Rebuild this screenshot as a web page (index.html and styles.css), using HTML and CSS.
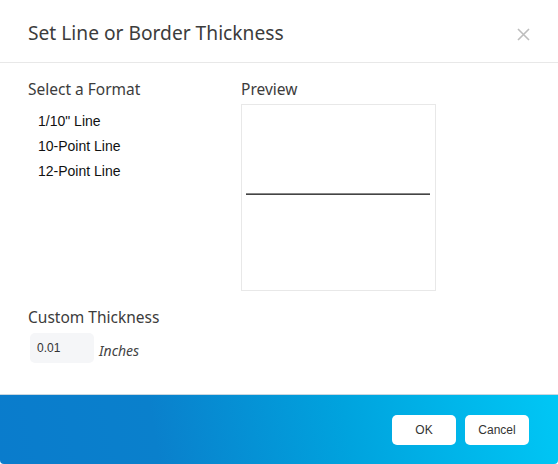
FILE: index.html
```html
<!DOCTYPE html>
<html>
<head>
<meta charset="utf-8">
<link rel="stylesheet" href="styles.css">
</head>
<body>
<div class="dialog">
  <header class="header">
    <h1 class="title">Set Line or Border Thickness</h1>
    <button class="close" aria-label="Close">
      <svg width="13" height="13" viewBox="0 0 13 13"><path d="M1 1L12 12M12 1L1 12" stroke="#bdbdbd" stroke-width="1.6" fill="none"/></svg>
    </button>
  </header>
  <main class="content">
    <div class="columns">
      <section class="format">
        <div class="label">Select a Format</div>
        <ul class="options">
          <li>1/10" Line</li>
          <li>10-Point Line</li>
          <li>12-Point Line</li>
        </ul>
      </section>
      <section class="preview">
        <div class="label">Preview</div>
        <div class="preview-box"><div class="preview-line"></div></div>
      </section>
    </div>
    <section class="custom">
      <div class="label">Custom Thickness</div>
      <div class="custom-row">
        <div class="input">0.01</div>
        <span class="unit">Inches</span>
      </div>
    </section>
  </main>
  <footer class="footer">
    <button class="btn">OK</button>
    <button class="btn">Cancel</button>
  </footer>
</div>
</body>
</html>
```

FILE: styles.css
```css
* { box-sizing: border-box; }
html, body { margin: 0; padding: 0; }
body {
  width: 558px;
  height: 464px;
  background: #fff;
  font-family: "Noto Sans", "Open Sans", sans-serif;
  color: #3a3a3a;
  overflow: hidden;
}
.dialog {
  width: 558px;
  height: 464px;
  display: flex;
  flex-direction: column;
  background: #fff;
}
.header {
  height: 63px;
  border-bottom: 1px solid #e8e8e8;
  display: flex;
  align-items: center;
  justify-content: space-between;
  padding: 0 28px 0 28px;
}
.title {
  margin: 0;
  font-size: 19.2px;
  font-weight: 400;
  color: #3c3c3c;
  line-height: 24px;
  margin-top: 4px;
}
.close {
  border: 0;
  background: none;
  padding: 0;
  width: 13px;
  height: 13px;
  display: block;
  margin-top: 6px;
  margin-right: 0;
}
.close svg { display: block; }
.content {
  flex: 1;
  padding: 14px 28px 0 28px;
}
.columns {
  display: flex;
}
.format { width: 213px; }
.label {
  font-size: 15.5px;
  line-height: 24px;
  color: #3c3c3c;
}
.options {
  list-style: none;
  margin: 8px 0 0 0;
  padding: 0 0 0 10px;
  font-family: "Liberation Sans", Arial, sans-serif;
  font-size: 14px;
  color: #111;
}
.options li {
  height: 25px;
  line-height: 25px;
}
.preview-box {
  margin-top: 3px;
  width: 195px;
  height: 187px;
  border: 1px solid #e8e8e8;
  padding: 88px 5px 0 4px;
}
.preview-line {
  height: 2px;
  background: #444;
  border-top: 1px solid #888;
}
.custom { margin-top: 14px; }
.custom-row {
  display: flex;
  align-items: center;
  margin-top: 4px;
  padding-left: 2px;
}
.input {
  width: 64px;
  height: 30px;
  background: #f5f6f8;
  border-radius: 5px;
  font-family: "Liberation Sans", Arial, sans-serif;
  font-size: 12px;
  color: #333;
  padding: 8px 0 0 7px;
}
.unit {
  font-style: italic;
  font-size: 14px;
  color: #444;
  margin-left: 5px;
  margin-top: 4px;
}
.footer {
  height: 70px;
  flex: none;
  border-top: 1px solid #c9d7e0;
  background: linear-gradient(80deg, #0a7ccc 0%, #0a80cc 28%, #00a3de 62%, #00c7f5 100%);
  display: flex;
  justify-content: flex-end;
  align-items: center;
  gap: 9px;
  padding: 0 29px 0 0;
  border-bottom-left-radius: 4px;
  border-bottom-right-radius: 4px;
}
.btn {
  width: 64px;
  height: 30px;
  border: 0;
  border-radius: 5px;
  background: #fff;
  font-family: "Liberation Sans", Arial, sans-serif;
  font-size: 12px;
  color: #333;
  padding: 0;
  margin-top: 1px;
}
```
